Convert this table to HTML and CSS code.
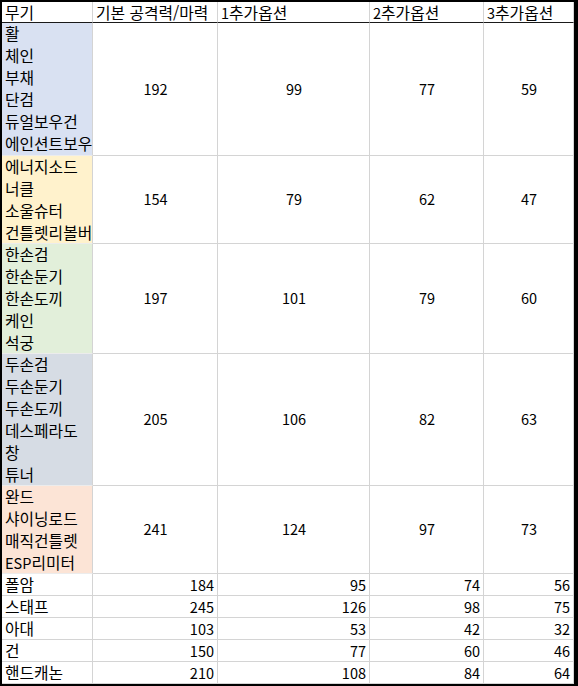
FILE: index.html
```html
<!DOCTYPE html>
<html lang="ko">
<head>
<meta charset="utf-8">
<title>무기 추가옵션</title>
<link rel="stylesheet" href="styles.css">
</head>
<body>
<div class="sheet">
  <div class="cell head name">무기</div>
  <div class="cell head">기본 공격력/마력</div>
  <div class="cell head"><span class="digit">1</span>추가옵션</div>
  <div class="cell head"><span class="digit">2</span>추가옵션</div>
  <div class="cell head last"><span class="digit">3</span>추가옵션</div>

  <div class="cell name list blue">활<br>체인<br>부채<br>단검<br>듀얼보우건<br>에인션트보우</div>
  <div class="cell mid">192</div>
  <div class="cell mid">99</div>
  <div class="cell mid">77</div>
  <div class="cell mid last">59</div>

  <div class="cell name list yellow">에너지소드<br>너클<br>소울슈터<br>건틀렛리볼버</div>
  <div class="cell mid">154</div>
  <div class="cell mid">79</div>
  <div class="cell mid">62</div>
  <div class="cell mid last">47</div>

  <div class="cell name list green">한손검<br>한손둔기<br>한손도끼<br>케인<br>석궁</div>
  <div class="cell mid">197</div>
  <div class="cell mid">101</div>
  <div class="cell mid">79</div>
  <div class="cell mid last">60</div>

  <div class="cell name list grey">두손검<br>두손둔기<br>두손도끼<br>데스페라도<br>창<br>튜너</div>
  <div class="cell mid">205</div>
  <div class="cell mid">106</div>
  <div class="cell mid">82</div>
  <div class="cell mid last">63</div>

  <div class="cell name list orange">완드<br>샤이닝로드<br>매직건틀렛<br><span class="latin">ESP</span>리미터</div>
  <div class="cell mid">241</div>
  <div class="cell mid">124</div>
  <div class="cell mid">97</div>
  <div class="cell mid last">73</div>

  <div class="cell name single">폴암</div>
  <div class="cell num">184</div>
  <div class="cell num">95</div>
  <div class="cell num">74</div>
  <div class="cell num last">56</div>

  <div class="cell name single">스태프</div>
  <div class="cell num">245</div>
  <div class="cell num">126</div>
  <div class="cell num">98</div>
  <div class="cell num last">75</div>

  <div class="cell name single">아대</div>
  <div class="cell num">103</div>
  <div class="cell num">53</div>
  <div class="cell num">42</div>
  <div class="cell num last">32</div>

  <div class="cell name single">건</div>
  <div class="cell num">150</div>
  <div class="cell num">77</div>
  <div class="cell num">60</div>
  <div class="cell num last">46</div>

  <div class="cell name single">핸드캐논</div>
  <div class="cell num">210</div>
  <div class="cell num">108</div>
  <div class="cell num">84</div>
  <div class="cell num last">64</div>
</div>
</body>
</html>
```

FILE: styles.css
```css
* {
  box-sizing: border-box;
}

html, body {
  margin: 0;
  padding: 0;
  background: #ffffff;
}

.sheet {
  width: 578px;
  height: 686px;
  overflow: hidden;
  border-style: solid;
  border-color: #000000;
  border-width: 2px 4px 2px 2px;
  display: grid;
  grid-template-columns: 91px 125px 152px 114px 90px;
  grid-template-rows: 21px 133px 88px 110px 132px 88px 22px 22px 22px 22px 22px;
  font-family: "Noto Sans CJK KR", "Malgun Gothic", "Noto Sans", sans-serif;
  font-size: 15.8px;
  color: #000000;
  background: #ffffff;
}

.cell {
  border-right: 1px solid #d4d4d4;
  border-bottom: 1px solid #d4d4d4;
  white-space: nowrap;
  overflow: hidden;
  line-height: 22px;
  padding: 0 2px 0 3px;
}

.head {
  line-height: 18px;
  border-bottom-color: #1a1a1a;
  padding-top: 2px;
}

.digit,
.latin {
  font-size: 14.5px;
}

.name {
  text-align: left;
}

.list {
  line-height: 22px;
  border-bottom-color: #ececec;
}

.blue { background: #d9e1f2; }
.yellow { background: #fff2cc; }
.green { background: #e2efda; }
.grey { background: #d6dce4; }
.orange { background: #fce4d6; }

.mid {
  display: flex;
  align-items: center;
  justify-content: center;
  padding-bottom: 1px;
  font-size: 14.5px;
}

.single {
  line-height: 21px;
}

.num {
  text-align: right;
  line-height: 21px;
  font-size: 14.5px;
  padding-right: 3px;
}
```
